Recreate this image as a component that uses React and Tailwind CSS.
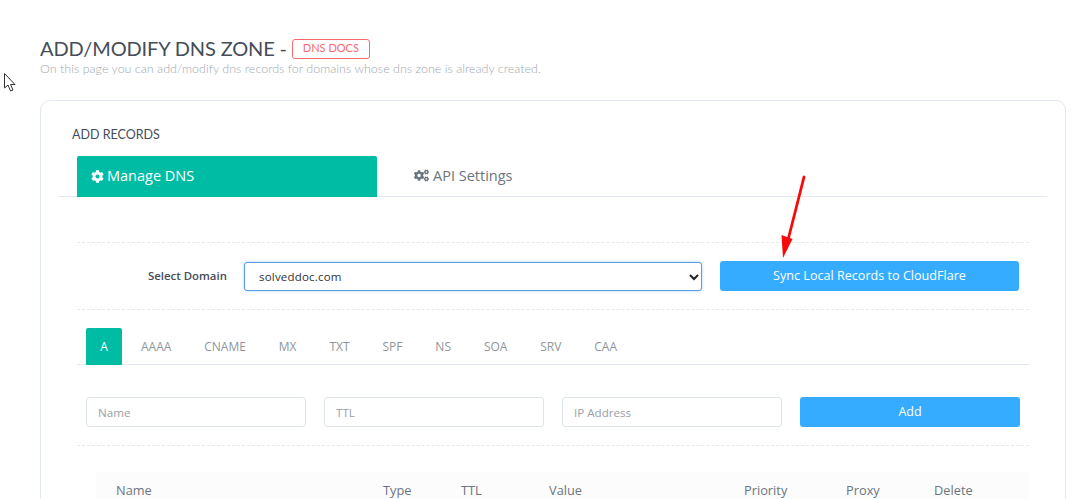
import React from "react";
import { FaCog, FaCogs } from "react-icons/fa";

const subTabs = ["AAAA", "CNAME", "MX", "TXT", "SPF", "NS", "SOA", "SRV", "CAA"];

function Dashed() {
  return <div className="h-0 border-t border-dashed border-[#e3eaef]" />;
}

function Field({ placeholder }) {
  return (
    <input
      readOnly
      placeholder={placeholder}
      className="w-[220px] h-[30px] rounded-[3px] border border-[#dee4ee] bg-white px-[11px] text-[11.6px] placeholder:text-[#9aa0a8] outline-none"
    />
  );
}

export default function App() {
  return (
    <div className="relative h-[499px] w-[1086px] overflow-hidden bg-white pl-10 pt-[38px] font-['Open_Sans',sans-serif] text-[#6c757d]">
      <svg className="absolute left-[4px] top-[73px]" width="13" height="19" viewBox="0 0 13 19">
        <path d="M0.5 0.5 V15 L4 12 L6.5 18 L9 17 L6.5 11.5 H11 Z" fill="#fff" stroke="#333" strokeWidth="1" />
      </svg>
      <svg className="absolute left-[778px] top-[174px]" width="32" height="86" viewBox="0 0 32 86">
        <path d="M26 3 L10 66" stroke="#f50b0b" strokeWidth="2.8" strokeLinecap="round" />
        <path d="M5 84 L3.5 61 L14.5 65 Z" fill="#f50b0b" />
      </svg>

      <div className="flex h-[21px] items-center font-['Lato',sans-serif]">
        <h1 className="pb-[1px] text-[20px] font-normal tracking-[-0.14px] text-[#444d58]">ADD/MODIFY DNS ZONE -</h1>
        <span className="ml-[5px] flex h-5 w-[78px] items-center justify-center rounded-[3px] border border-[#fb6a6f] text-[11px] text-[#fb6a6f]">
          DNS DOCS
        </span>
      </div>
      <p className="mt-[1px] font-['Lato',sans-serif] text-[12.5px] font-light leading-[18px] text-[#a3a9b0]">
        On this page you can add/modify dns records for domains whose dns zone is already created.
      </p>

      <div className="mt-[22px] w-[1026px] rounded-[10px] border border-[#e2e8f0] pt-[26px]">
        <h2 className="ml-[31px] font-['Lato',sans-serif] text-[12.5px] font-normal leading-4 text-[#444d58]">ADD RECORDS</h2>

        <div className="ml-[17px] mt-[13px] flex h-[41px] w-[989px] border-b border-[#e2e8f0] pl-[19px]">
          <div className="flex h-[41px] w-[300px] items-center gap-[3px] rounded-t-[2px] bg-[#00bca4] pb-[1px] pl-[14px] text-[14.5px] text-white">
            <FaCog className="text-[13px]" />
            Manage DNS
          </div>
          <div className="ml-[37px] flex h-10 items-center gap-[4px] pb-[1px] text-[14.5px] text-[#6c757d]">
            <FaCogs className="text-[15px]" />
            API Settings
          </div>
        </div>

        <div className="ml-9 mt-[45px] w-[952px]">
          <Dashed />
          <div className="flex h-[66px] items-center">
            <label className="ml-[71px] w-[96px] text-[11.4px] font-semibold text-[#444d58]">Select Domain</label>
            <div className="relative">
              <select className="h-[29px] w-[458px] appearance-none rounded-[3px] border border-[#5b9ee6] bg-white pl-[14px] pt-[1px] text-[11.5px] tracking-[0.2px] text-[#333] shadow-[0_0_3px_rgba(51,153,255,0.45)] outline-none">
                <option>solveddoc.com</option>
              </select>
              <svg className="absolute right-[3px] top-[11px]" width="10" height="8" viewBox="0 0 10 8">
                <path d="M1 2 L5 6 L9 2" fill="none" stroke="#222" strokeWidth="2" />
              </svg>
            </div>
            <button className="ml-[18px] h-[30px] w-[299px] rounded-[3px] bg-[#35acff] text-[12.6px] text-white">
              Sync Local Records to CloudFlare
            </button>
          </div>
          <Dashed />

          <div className="mt-[18px] flex h-[37px] items-center border-b border-[#e2e8f0] pl-[9px] text-[12px] text-[#8f969e]">
            <div className="flex h-[37px] w-9 items-center justify-center rounded-t-[2px] bg-[#00bca4] pt-[1px] text-white">A</div>
            <div className="ml-[19px] flex gap-[32.9px] pt-[1px]">
              {subTabs.map((t) => (
                <span key={t}>{t}</span>
              ))}
            </div>
          </div>

          <div className="ml-[9px] mt-8 flex gap-[18px]">
            <Field placeholder="Name" />
            <Field placeholder="TTL" />
            <Field placeholder="IP Address" />
            <button className="h-[30px] w-[220px] rounded-[3px] bg-[#35acff] text-[12.5px] text-white">Add</button>
          </div>
          <div className="mt-[18px]">
            <Dashed />
          </div>

          <div className="ml-[19px] mt-[26px] grid h-[40px] w-[933px] grid-cols-[267px_78px_88px_195px_102px_88px_1fr] bg-[#fcfcfc] pl-5 pt-[9px] text-[12.8px] text-[#6c757d]">
            <span>Name</span>
            <span>Type</span>
            <span>TTL</span>
            <span>Value</span>
            <span>Priority</span>
            <span>Proxy</span>
            <span>Delete</span>
          </div>
        </div>
      </div>
    </div>
  );
}
